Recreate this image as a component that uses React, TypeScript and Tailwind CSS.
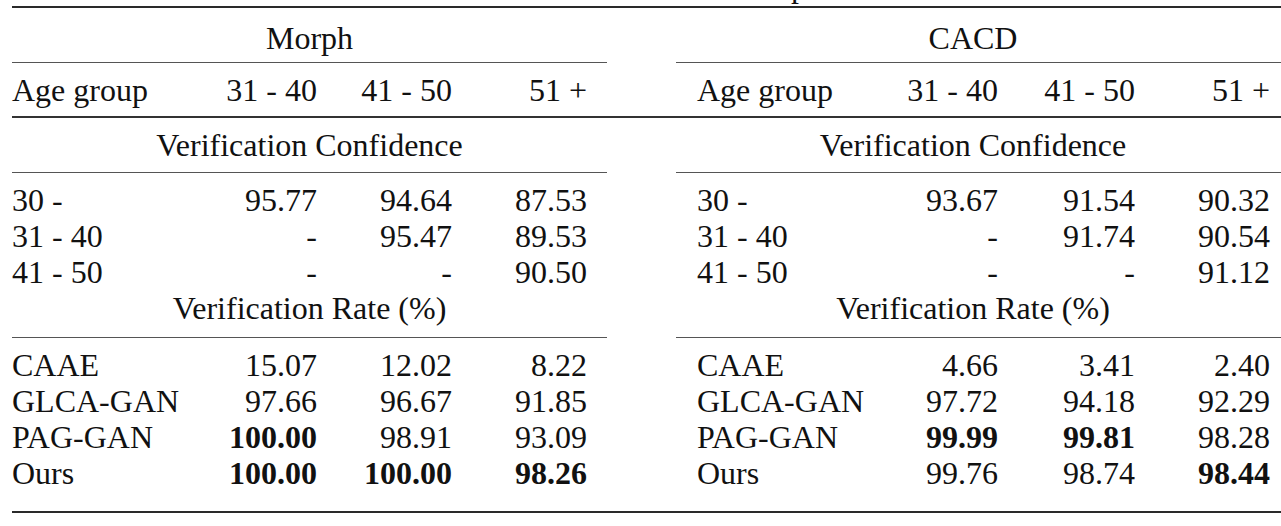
import React from 'react';

type Cell = { v: string; b?: boolean };

const GRID =
  'grid grid-cols-[170px_135px_135px_135px_20px_69px_21px_166px_135px_137px_135px_20px]';

const c = (v: string, b = false): Cell => ({ v, b });

const confRows: [string, Cell[], Cell[]][] = [
  ['30 -', [c('95.77'), c('94.64'), c('87.53')], [c('93.67'), c('91.54'), c('90.32')]],
  ['31 - 40', [c('-'), c('95.47'), c('89.53')], [c('-'), c('91.74'), c('90.54')]],
  ['41 - 50', [c('-'), c('-'), c('90.50')], [c('-'), c('-'), c('91.12')]],
];

const rateRows: [string, Cell[], Cell[]][] = [
  ['CAAE', [c('15.07'), c('12.02'), c('8.22')], [c('4.66'), c('3.41'), c('2.40')]],
  ['GLCA-GAN', [c('97.66'), c('96.67'), c('91.85')], [c('97.72'), c('94.18'), c('92.29')]],
  ['PAG-GAN', [c('100.00', true), c('98.91'), c('93.09')], [c('99.99', true), c('99.81', true), c('98.28')]],
  ['Ours', [c('100.00', true), c('100.00', true), c('98.26', true)], [c('99.76'), c('98.74'), c('98.44', true)]],
];

const Val = ({ cell }: { cell: Cell }) => (
  <div className={`text-right ${cell.b ? 'font-bold' : ''}`}>{cell.v}</div>
);

const DataRow = ({ label, left, right }: { label: string; left: Cell[]; right: Cell[] }) => (
  <div className={`${GRID} h-[36px] leading-[36px] whitespace-nowrap`}>
    <div>{label}</div>
    {left.map((x, i) => <Val key={i} cell={x} />)}
    <div />
    <div />
    <div />
    <div>{label}</div>
    {right.map((x, i) => <Val key={i} cell={x} />)}
    <div />
  </div>
);

const SpanRow = ({ left, right, className = '' }: { left: string; right: string; className?: string }) => (
  <div className={`${GRID} h-[36px] leading-[36px] whitespace-nowrap ${className}`}>
    <div className="col-span-5 text-center">{left}</div>
    <div />
    <div className="col-span-5 text-center">{right}</div>
    <div />
  </div>
);

// cmidrule pair: one under each block
const SplitRule = ({ className = '' }: { className?: string }) => (
  <div className={`${GRID} h-px ${className}`}>
    <div className="col-span-5 bg-[#555]" />
    <div />
    <div className="col-span-6 bg-[#555]" />
  </div>
);

export default function App() {
  return (
    <div className="w-[1281px] h-[526px] overflow-hidden bg-white text-[#111] text-[32px] font-['Liberation_Serif','Times_New_Roman',serif]">
      <div className="ml-[12px] w-[1278px] flex flex-col">
        {/* caption, cut off at the top edge */}
        <div className="h-[6px] overflow-hidden">
          <div className="mt-[-32px] pl-[779px] h-[36px] leading-[36px]">p</div>
        </div>
        <div className="h-[2px] bg-[#2a2a2a]" />

        <SpanRow left="Morph" right="CACD" className="mt-[12px]" />
        <SplitRule className="mt-[6px]" />

        <div className={`${GRID} h-[36px] leading-[36px] whitespace-nowrap mt-[9px]`}>
          <div>Age group</div>
          <div className="text-right">31 - 40</div>
          <div className="text-right">41 - 50</div>
          <div className="text-right">51 +</div>
          <div />
          <div />
          <div />
          <div>Age group</div>
          <div className="text-right">31 - 40</div>
          <div className="text-right">41 - 50</div>
          <div className="text-right">51 +</div>
          <div />
        </div>
        <div className="h-[2px] bg-[#333] mt-[8px]" />

        <SpanRow left="Verification Confidence" right="Verification Confidence" className="mt-[9px]" />
        <SplitRule className="mt-[9px]" />

        <div className="mt-[9px]">
          {confRows.map(([label, l, r]) => (
            <DataRow key={label} label={label} left={l} right={r} />
          ))}
        </div>
        <SpanRow left="Verification Rate (%)" right="Verification Rate (%)" />
        <SplitRule className="mt-[11px]" />

        <div className="mt-[9px]">
          {rateRows.map(([label, l, r]) => (
            <DataRow key={label} label={label} left={l} right={r} />
          ))}
        </div>
        <div className="h-[2px] bg-[#2a2a2a] mt-[20px]" />
      </div>
    </div>
  );
}
